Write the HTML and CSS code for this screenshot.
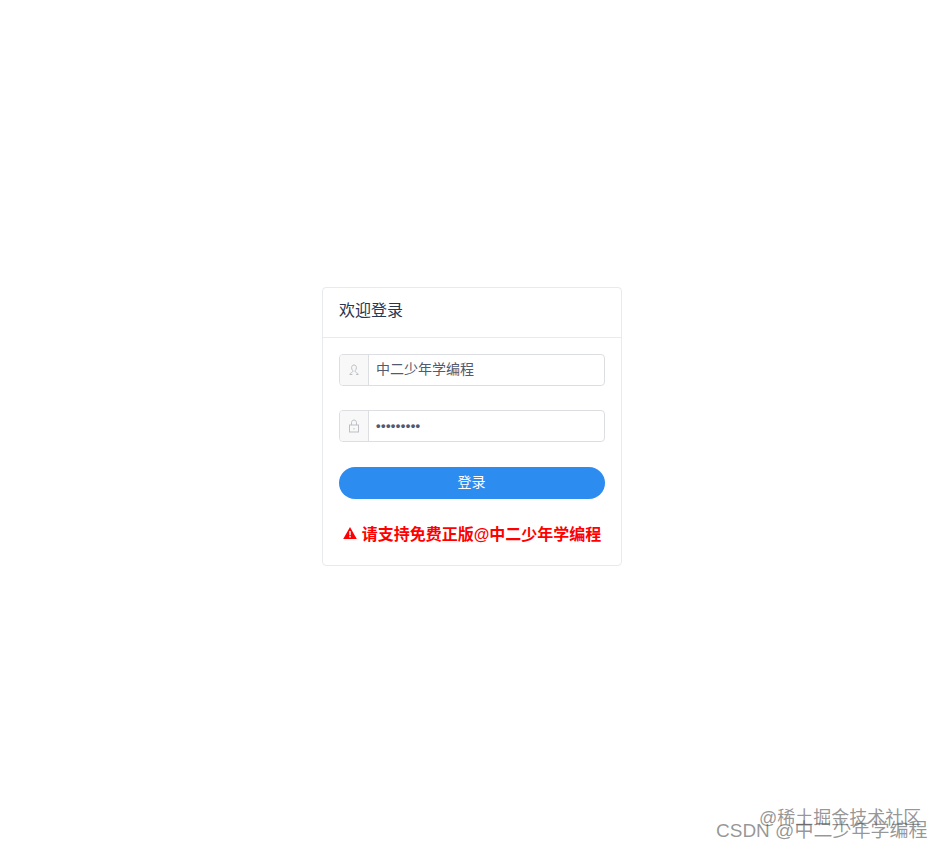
FILE: index.html
```html
<!DOCTYPE html>
<html lang="zh-CN">
<head>
<meta charset="utf-8">
<title>欢迎登录</title>
<link rel="stylesheet" href="styles.css">
</head>
<body>
<main class="page">
  <section class="card">
    <header class="card-head">欢迎登录</header>
    <form class="card-body">
      <div class="field">
        <span class="prefix">
          <svg class="icon" viewBox="0 0 14 14" width="14" height="14" fill="none" stroke="#bcbfc5" stroke-width="1">
            <path d="M7 2C5.600 2 4.600 3.100 4.600 4.700c0 1.200.5 2.200 1.200 2.900.2.900-.2 1.500-1.100 2-.8.4-1.600.7-1.900 1.900h2.600M7 2c1.400 0 2.400 1.100 2.400 2.700 0 1.200-.5 2.200-1.200 2.900-.2.900.2 1.500 1.100 2 .8.4 1.600.7 1.900 1.900H9.100"/>
          </svg>
        </span>
        <span class="value">中二少年学编程</span>
      </div>
      <div class="field">
        <span class="prefix">
          <svg class="icon" viewBox="0 0 14 14" width="14" height="14" fill="none" stroke="#bcbfc5" stroke-width="1">
            <rect x="2.500" y="6" width="9" height="7"/>
            <path d="M4.500 6V3.600C4.500 2.200 5.600 1 7 1s2.500 1.200 2.500 2.600V6"/>
            <path d="M7 9v1.500"/>
          </svg>
        </span>
        <span class="value dots">•••••••••</span>
      </div>
      <button class="submit" type="button">登录</button>
      <p class="notice">
        <svg class="warn" viewBox="0 0 14 14" width="14" height="14">
          <path fill="#ff0000" d="M7 1 13.800 13H.200z"/>
          <path fill="#ffffff" d="M6.300 5h1.400v4.300H6.300zM6.300 10h1.400v1.500H6.300z"/>
        </svg>
        <span>请支持免费正版@中二少年学编程</span>
      </p>
    </form>
  </section>
</main>
<div class="mark mark-juejin">@稀土掘金技术社区</div>
<div class="mark mark-csdn">CSDN @中二少年学编程</div>
</body>
</html>
```
FILE: styles.css
```css
* { box-sizing: border-box; }
html, body { margin: 0; height: 100%; }
body {
  background: #fff;
  color: #515a6e;
  font-family: "Liberation Sans", "Noto Sans CJK SC", sans-serif;
  font-size: 14px;
  overflow: hidden;
  position: relative;
}
.page {
  min-height: 851px;
  display: flex;
  justify-content: center;
  align-items: flex-start;
  padding-top: 287px;
  padding-left: 1px;
}
.card {
  width: 300px;
  height: 279px;
  background: #fff;
  border: 1px solid #e8eaec;
  border-radius: 4px;
}
.card-head {
  height: 50px;
  padding-left: 16px;
  line-height: 45px;
  font-size: 16px;
  color: #2a3550;
  border-bottom: 1px solid #e8eaec;
}
.card-body {
  display: flex;
  flex-direction: column;
  padding: 16px 16px 0;
}
.field {
  display: flex;
  align-items: stretch;
  height: 32px;
  margin-bottom: 24px;
  border: 1px solid #dcdee2;
  border-radius: 4px;
  overflow: hidden;
}
.prefix {
  width: 29px;
  display: flex;
  align-items: center;
  justify-content: center;
  background: #f8f8f9;
  border-right: 1px solid #dcdee2;
}
.value {
  padding-left: 7px;
  line-height: 29px;
  font-size: 14px;
}
.dots {
  font-size: 13px;
  letter-spacing: 0.4px;
  color: #515a6e;
  font-weight: 700;
}
.submit {
  height: 32px;
  margin-top: 1px;
  padding: 0 1px 4px 0;
  border: 0;
  border-radius: 16px;
  background: #2d8cf0;
  color: #fff;
  font: inherit;
  font-size: 14px;
}
.notice {
  display: flex;
  align-items: center;
  justify-content: center;
  gap: 5px;
  margin: 23px 0 0;
  height: 22px;
  color: #ff0000;
  font-size: 16px;
  font-weight: 700;
  white-space: nowrap;
}
.mark {
  position: absolute;
  color: rgba(80, 80, 80, 0.6);
  white-space: nowrap;
  line-height: 22px;
}
.mark-juejin { left: 759px; top: 807px; font-size: 18px; }
.mark-csdn { left: 716px; top: 820px; font-size: 19px; }
```
